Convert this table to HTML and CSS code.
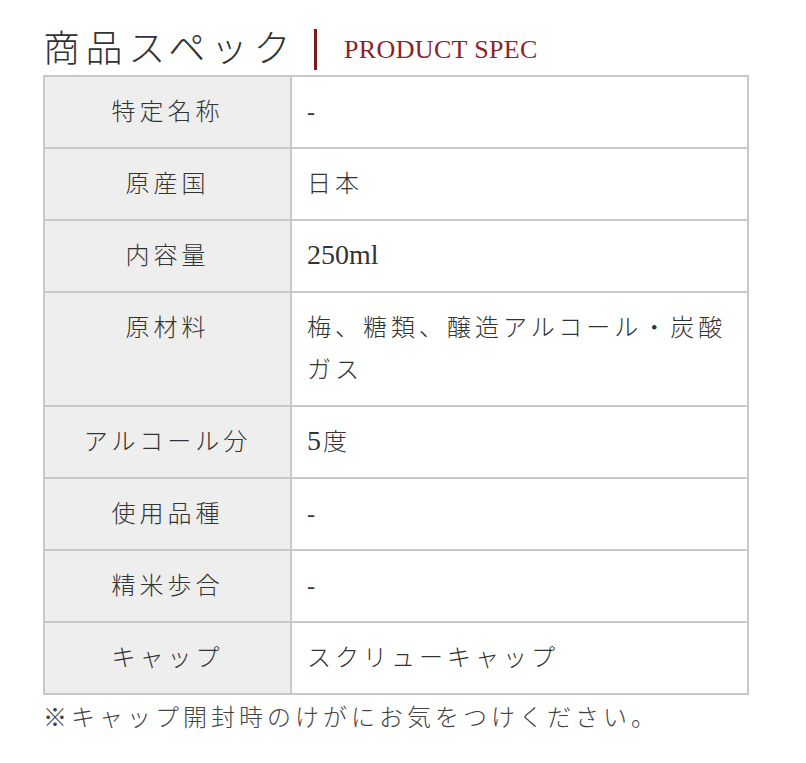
FILE: index.html
```html
<!DOCTYPE html>
<html lang="ja">
<head>
<meta charset="utf-8">
<link rel="stylesheet" href="styles.css">
</head>
<body>
<div class="spec">
  <div class="spec-head">
    <h2 class="spec-title">商品スペック</h2>
    <span class="spec-bar"></span>
    <span class="spec-en">PRODUCT SPEC</span>
  </div>
  <table class="spec-table">
    <colgroup><col class="col-label"><col class="col-value"></colgroup>
    <tr><th>特定名称</th><td>-</td></tr>
    <tr><th>原産国</th><td>日本</td></tr>
    <tr><th>内容量</th><td><span class="num">250ml</span></td></tr>
    <tr><th>原材料</th><td>梅、糖類、醸造アルコール・炭酸ガス</td></tr>
    <tr><th>アルコール分</th><td><span class="num">5</span>度</td></tr>
    <tr><th>使用品種</th><td>-</td></tr>
    <tr><th>精米歩合</th><td>-</td></tr>
    <tr><th>キャップ</th><td>スクリューキャップ</td></tr>
  </table>
  <p class="spec-note">※キャップ開封時のけがにお気をつけください。</p>
</div>
</body>
</html>
```

FILE: styles.css
```css
html, body {
  margin: 0;
  padding: 0;
  background: #ffffff;
}
body {
  font-family: "Liberation Serif", "Noto Sans CJK JP", serif;
  color: #333333;
}
.spec {
  width: 706px;
  margin-left: 43px;
}
.spec-head {
  box-sizing: border-box;
  display: flex;
  align-items: center;
  height: 75px;
  padding-top: 24px;
}
.spec-title {
  margin: 0;
  font-size: 37px;
  font-weight: 300;
  letter-spacing: 5.6px;
  color: #333333;
  line-height: 1;
}
.spec-bar {
  width: 3px;
  height: 41px;
  background: #7b1c1c;
  margin-left: 18px;
  margin-right: 27px;
}
.spec-en {
  font-size: 26px;
  letter-spacing: 0.35px;
  color: #8a2424;
  font-weight: normal;
  line-height: 1;
}
.spec-table {
  width: 706px;
  border-collapse: collapse;
  table-layout: fixed;
  border: 2px solid #c8c8c8;
}
.col-label { width: 247px; }
.spec-table th,
.spec-table td {
  border: 2px solid #c8c8c8;
  padding: 14px 16px 14px 15px;
  line-height: 42px;
  font-size: 24px;
  font-weight: 300;
  letter-spacing: 4px;
  vertical-align: top;
  color: #333333;
}
.spec-table th {
  background: #eeeeee;
  text-align: center;
  padding-left: 12px;
  padding-right: 12px;
}
.spec-table td {
  text-align: left;
  background: #ffffff;
}
.num {
  font-size: 28px;
  line-height: 1;
  letter-spacing: 0;
  margin-right: 2px;
}
.spec-note {
  margin: 2px 0 0 0;
  font-size: 24px;
  font-weight: 300;
  letter-spacing: 4px;
  line-height: 42px;
  color: #444444;
}
```
